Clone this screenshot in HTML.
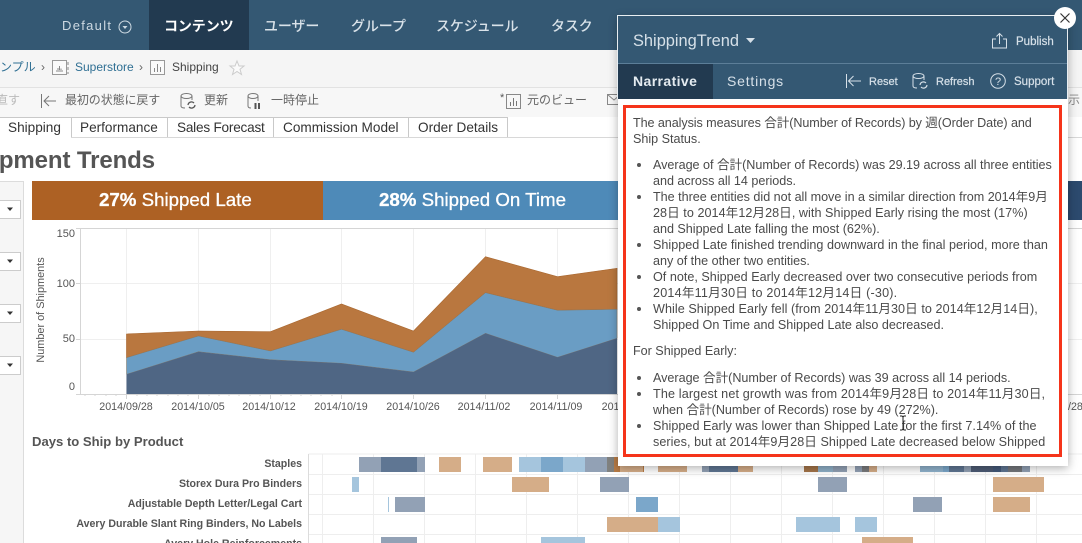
<!DOCTYPE html>
<html lang="ja"><head><meta charset="utf-8"><title>Shipping</title>
<style>
html,body{margin:0;padding:0;width:1082px;height:543px;overflow:hidden;background:#fff}
body{position:relative;font-family:"Liberation Sans","Noto Sans CJK JP",sans-serif;color:#444}
.a{position:absolute;white-space:nowrap}
.b{position:absolute}
svg{position:absolute;overflow:visible}
.nav{top:16px;line-height:20px;font-size:14px;color:#d9e2e9;font-weight:500;letter-spacing:-.1px}
.tb{top:92px;line-height:17px;font-size:12px;color:#666}
.tab{top:118px;line-height:19px;font-size:13.6px;color:#333}
.tl{position:absolute;top:117px;width:1px;height:20px;background:#c9c9c9}
.xl{top:400px;font-size:10.7px;line-height:14px;color:#555;transform:translateX(-50%)}
.yl{font-size:11px;line-height:14px;color:#555;text-align:right;width:24px;left:51px}
.pl{right:780px;font-size:10.6px;font-weight:bold;line-height:14px;color:#555}
.t{position:absolute;white-space:nowrap;font-size:12.6px;line-height:16px;color:#4a4a4a;letter-spacing:-.02px}
.d{position:absolute;left:637px;width:4px;height:4px;border-radius:50%;background:#555}
.r{position:absolute}
.o{background:#d5ad88}.l{background:#a5c5dd}.k{background:#92a1b5}.m{background:#7ba7ca}.n{background:#5f7693}
.ph{color:#d6e0e8;font-size:11.5px;line-height:16px;-webkit-text-stroke:.2px #d6e0e8}
</style></head><body>

<!-- top nav -->
<div class="b" style="left:0;top:0;width:1082px;height:50px;background:#345873"></div>
<div class="b" style="left:149px;top:0;width:100px;height:50px;background:#223a50"></div>
<div class="a" style="left:62px;top:17px;line-height:18px;font-size:13px;letter-spacing:1.3px;color:#cdd9e2">Default</div>
<svg style="left:118px;top:20px" width="14" height="14" viewBox="0 0 14 14"><circle cx="7" cy="7" r="6" fill="none" stroke="#cdd9e2"/><path d="M4.5 6h5L7 9z" fill="#cdd9e2"/></svg>
<div class="a nav" style="left:164px;color:#fff;font-weight:700">コンテンツ</div>
<div class="a nav" style="left:264px">ユーザー</div>
<div class="a nav" style="left:351px">グループ</div>
<div class="a nav" style="left:436px">スケジュール</div>
<div class="a nav" style="left:551px">タスク</div>

<!-- breadcrumb -->
<div class="b" style="left:0;top:50px;width:1082px;height:37px;background:#f5f5f5;border-bottom:1px solid #e2e2e2"></div>
<div class="a" style="left:-12px;top:59px;line-height:17px;font-size:12px;color:#2f6f93">サンプル</div>
<div class="a" style="left:41px;top:59px;line-height:17px;font-size:12px;color:#666">›</div>
<svg style="left:52px;top:60px" width="17" height="16" viewBox="0 0 17 16"><rect x=".5" y=".5" width="14" height="14" fill="#fafafa" stroke="#999"/><path d="M4 11h7M6 10V8M7.5 10V6M9 10V8.500" stroke="#888" fill="none"/><path d="M16 2v3M16 7v3M16 12v2" stroke="#888"/></svg>
<div class="a" style="left:75px;top:59px;line-height:17px;font-size:12px;color:#2f6f93">Superstore</div>
<div class="a" style="left:139px;top:59px;line-height:17px;font-size:12px;color:#666">›</div>
<svg style="left:150px;top:60px" width="16" height="16" viewBox="0 0 16 16"><rect x=".5" y=".5" width="14" height="14" fill="#fafafa" stroke="#999"/><path d="M4.500 12V8M7.500 12V4M10.500 12V7" stroke="#888" fill="none"/></svg>
<div class="a" style="left:172px;top:59px;line-height:17px;font-size:12px;color:#444">Shipping</div>
<svg style="left:229px;top:60px" width="16" height="16" viewBox="0 0 16 16"><path d="M8 1l2 5h5l-4 3.300 1.500 5.200L8 11.500l-4.500 3L5 9.300 1 6h5z" fill="#fafafa" stroke="#ccc"/></svg>

<!-- toolbar -->
<div class="b" style="left:0;top:88px;width:1082px;height:29px;background:#f7f7f7"></div>
<div class="a tb" style="left:-4px;color:#bbb">直す</div>
<svg style="left:41px;top:93px" width="16" height="16" viewBox="0 0 16 16"><path d="M.5 1v14M15 8H3M8 3L3 8l5 5" fill="none" stroke="#777"/></svg>
<div class="a tb" style="left:65px;letter-spacing:-.1px">最初の状態に戻す</div>
<svg style="left:180px;top:93px" width="17" height="16" viewBox="0 0 17 16"><ellipse cx="6.500" cy="3" rx="5.500" ry="2.500" fill="none" stroke="#777"/><path d="M1 3v10q0 2 4 2M12 3v4" fill="none" stroke="#777"/><path d="M8 12a3.500 3.500 0 0 1 6-2M15 12a3.500 3.500 0 0 1-6 2" fill="none" stroke="#555" stroke-width="1.300"/></svg>
<div class="a tb" style="left:204px">更新</div>
<svg style="left:247px;top:93px" width="16" height="17" viewBox="0 0 16 17"><ellipse cx="6" cy="3" rx="5" ry="2.500" fill="none" stroke="#777"/><path d="M1 3v10q0 2 3 2M11 3v5" fill="none" stroke="#777"/><path d="M7.500 10h2v6h-2zM11 10h2v6h-2z" fill="#555"/></svg>
<div class="a tb" style="left:271px">一時停止</div>
<div class="a" style="left:500px;top:91px;font-size:11px;line-height:14px;color:#555">*</div>
<svg style="left:506px;top:94px" width="16" height="16" viewBox="0 0 16 16"><rect x=".5" y=".5" width="14" height="14" fill="none" stroke="#888"/><path d="M4.500 12V8M7.500 12V4M10.500 12V7" stroke="#777"/></svg>
<div class="a tb" style="left:527px">元のビュー</div>
<svg style="left:607px;top:94px" width="14" height="12" viewBox="0 0 14 12"><rect x=".5" y=".5" width="13" height="10" fill="none" stroke="#888"/><path d="M.5 .5L7 6l6-5" fill="none" stroke="#888"/></svg>
<div class="a tb" style="left:1068px;color:#888">示</div>

<!-- tabs -->
<div class="b" style="left:71px;top:117px;width:436px;height:1px;background:#c9c9c9"></div>
<div class="b" style="left:0;top:137px;width:1082px;height:1px;background:#d8d8d8"></div>
<div class="b" style="left:0;top:117px;width:71px;height:21px;background:#fff"></div>
<div class="b" style="left:0;top:117px;width:71px;height:1px;background:#c9c9c9"></div>
<div class="tl" style="left:71px"></div><div class="tl" style="left:167px"></div><div class="tl" style="left:273px"></div><div class="tl" style="left:408px"></div><div class="tl" style="left:507px"></div>
<div class="a tab" style="left:8px">Shipping</div>
<div class="a tab" style="left:80px">Performance</div>
<div class="a tab" style="left:177px;letter-spacing:-.22px">Sales Forecast</div>
<div class="a tab" style="left:283px">Commission Model</div>
<div class="a tab" style="left:418px">Order Details</div>

<!-- title -->
<div class="a" style="right:927px;top:147px;line-height:28px;font-size:24px;font-weight:bold;color:#555;letter-spacing:-.1px">Shipment Trends</div>

<!-- sidebar -->
<div class="b" style="left:0;top:181px;width:23px;height:362px;background:#f6f6f6;border-right:1px solid #dcdcdc;border-top:1px solid #dcdcdc"></div>
<div class="b" style="left:-2px;top:200px;width:21px;height:17px;background:#fff;border:1px solid #ccc"></div>
<div class="b" style="left:-2px;top:252px;width:21px;height:17px;background:#fff;border:1px solid #ccc"></div>
<div class="b" style="left:-2px;top:304px;width:21px;height:17px;background:#fff;border:1px solid #ccc"></div>
<div class="b" style="left:-2px;top:356px;width:21px;height:17px;background:#fff;border:1px solid #ccc"></div>
<svg style="left:0;top:0" width="30" height="400"><path d="M7 207.500h6l-3 3.500zM7 259.500h6l-3 3.500zM7 311.500h6l-3 3.500zM7 363.500h6l-3 3.500z" fill="#333"/></svg>

<!-- kpi bars -->
<div class="b" style="left:32px;top:181px;width:291px;height:39px;background:#ad6124"></div>
<div class="b" style="left:323px;top:181px;width:295px;height:39px;background:#4e8ab8"></div>
<div class="b" style="left:1060px;top:181px;width:22px;height:39px;background:#2c4a6e"></div>
<div class="a" style="left:99px;top:189px;line-height:22px;font-size:18.7px;color:#fff;-webkit-text-stroke:.3px #fff"><b>27%</b> Shipped Late</div>
<div class="a" style="left:379px;top:189px;line-height:22px;font-size:18.7px;color:#fff;-webkit-text-stroke:.3px #fff"><b>28%</b> Shipped On Time</div>

<!-- area chart -->
<svg style="left:0;top:0" width="1082" height="543" viewBox="0 0 1082 543">
<g fill="none" stroke="#efefef">
<path d="M126.500 228.500V394M198.500 228.500V394M270.500 228.500V394M341.500 228.500V394M413.500 228.500V394M485.500 228.500V394M557.500 228.500V394M81 283.500H1082M81 339.500H1082"/>
</g>
<path d="M76 228.500H1082" stroke="#d5d5d5" fill="none"/>
<path d="M80.500 228V394.500M76 394.500H1082M76 283.500h5M76 339.500h5" stroke="#d5d5d5" fill="none"/>
<path d="M126.500 394v5M198.500 394v5M270.500 394v5M341.500 394v5M413.500 394v5M485.500 394v5M557.500 394v5M85 394v2M95 394v2M106 394v2M116 394v2M137 394v2M147 394v2M157 394v2M168 394v2M178 394v2M188 394v2M209 394v2M219 394v2M229 394v2M239 394v2M250 394v2M260 394v2M281 394v2M291 394v2M301 394v2M311 394v2M321 394v2M332 394v2" stroke="#d5d5d5" fill="none"/>
<path d="M126.500 334L198.500 331L270.500 331.700L341.500 304L413.500 331L485.500 256.700L557.500 276.700L617 268.300V309.300L557.500 310.300L485.500 292.700L413.500 352.300L341.500 329.300L270.500 351L198.500 336L126.500 357.700Z" fill="#b9773f" stroke="#a8662e" stroke-width=".6"/>
<path d="M126.500 357.700L198.500 336L270.500 351L341.500 329.300L413.500 352.300L485.500 292.700L557.500 310.300L617 309.300V338.300L557.500 357.300L485.500 333.300L413.500 372L341.500 363.300L270.500 359.700L198.500 351.700L126.500 374.300Z" fill="#6a9dc4" stroke="#8c7a62" stroke-width=".5"/>
<path d="M126.500 374.300L198.500 351.700L270.500 359.700L341.500 363.300L413.500 372L485.500 333.300L557.500 357.300L617 338.300V394H126.500Z" fill="#4f6684"/>
<path d="M1068 283.500h14M1068 339.500h14" stroke="#efefef"/>
</svg>
<div class="a yl" style="top:227px">150</div>
<div class="a yl" style="top:277px">100</div>
<div class="a yl" style="top:332px">50</div>
<div class="a yl" style="top:380px">0</div>
<div class="a" style="left:41px;top:310px;font-size:10.9px;line-height:14px;color:#555;transform:translate(-50%,-50%) rotate(-90deg)">Number of Shipments</div>
<div class="a xl" style="left:126px">2014/09/28</div>
<div class="a xl" style="left:198px">2014/10/05</div>
<div class="a xl" style="left:269px">2014/10/12</div>
<div class="a xl" style="left:341px">2014/10/19</div>
<div class="a xl" style="left:413px">2014/10/26</div>
<div class="a xl" style="left:484px">2014/11/02</div>
<div class="a xl" style="left:556px">2014/11/09</div>
<div class="a xl" style="left:628px">2014/11/16</div>
<div class="a" style="left:1068px;top:400px;font-size:10.7px;line-height:14px;color:#555">/28</div>

<!-- gantt -->
<div class="a" style="left:32px;top:434px;line-height:16px;font-size:13.1px;font-weight:bold;color:#555">Days to Ship by Product</div>
<div class="a pl" style="top:457px">Staples</div>
<div class="a pl" style="top:477px">Storex Dura Pro Binders</div>
<div class="a pl" style="top:497px">Adjustable Depth Letter/Legal Cart</div>
<div class="a pl" style="top:517px">Avery Durable Slant Ring Binders, No Labels</div>
<div class="a pl" style="top:537px">Avery Hole Reinforcements</div>
<svg style="left:0;top:0" width="1082" height="543" viewBox="0 0 1082 543"><g stroke="#eeeeee" fill="none" stroke-width="1">
<path d="M308.500 454H1082M308.500 474.500H1082M308.500 494.500H1082M308.500 514.500H1082M308.500 534.500H1082"/>
<path d="M322.500 454V543M373.500 454V543M424.500 454V543M475.500 454V543M526.500 454V543M577.500 454V543M628.500 454V543M679.500 454V543M730.500 454V543M781.500 454V543M832.500 454V543M883.500 454V543M934.500 454V543M985.500 454V543M1036.500 454V543"/></g>
<path d="M308.500 454V543" stroke="#dcdcdc"/></svg>
<div class="r k" style="left:359px;top:457px;width:22px;height:15px"></div>
<div class="r n" style="left:381px;top:457px;width:36px;height:15px"></div>
<div class="r k" style="left:417px;top:457px;width:8px;height:15px"></div>
<div class="r o" style="left:439px;top:457px;width:22px;height:15px"></div>
<div class="r o" style="left:483px;top:457px;width:29px;height:15px"></div>
<div class="r l" style="left:519px;top:457px;width:22px;height:15px"></div>
<div class="r m" style="left:541px;top:457px;width:22px;height:15px"></div>
<div class="r l" style="left:563px;top:457px;width:22px;height:15px"></div>
<div class="r k" style="left:585px;top:457px;width:22px;height:15px"></div>
<div class="r" style="left:607px;top:457px;width:7px;height:15px;background:#80817f"></div>
<div class="r" style="left:614px;top:457px;width:30px;height:15px;background:#b77b45"></div>
<!-- row1 below panel -->
<div class="r o" style="left:620px;top:457px;width:23px;height:15px"></div>
<div class="r o" style="left:658px;top:457px;width:29px;height:15px"></div>
<div class="r k" style="left:702px;top:457px;width:7px;height:15px"></div>
<div class="r n" style="left:709px;top:457px;width:29px;height:15px"></div>
<div class="r o" style="left:738px;top:457px;width:15px;height:15px"></div>
<div class="r" style="left:804px;top:457px;width:14px;height:15px;background:#a57549"></div>
<div class="r" style="left:818px;top:457px;width:15px;height:15px;background:#8fb0c8"></div>
<div class="r k" style="left:833px;top:457px;width:14px;height:15px"></div>
<div class="r k" style="left:855px;top:457px;width:7px;height:15px"></div>
<div class="r" style="left:862px;top:457px;width:7px;height:15px;background:#7b7b7d"></div>
<div class="r o" style="left:869px;top:457px;width:8px;height:15px"></div>
<div class="r" style="left:920px;top:457px;width:23px;height:15px;background:#90b3cd"></div>
<div class="r" style="left:943px;top:457px;width:6px;height:15px;background:#7ba7ca"></div>
<div class="r n" style="left:949px;top:457px;width:15px;height:15px"></div>
<div class="r k" style="left:964px;top:457px;width:7px;height:15px"></div>
<div class="r" style="left:971px;top:457px;width:22px;height:15px;background:#4d5c75"></div>
<div class="r" style="left:993px;top:457px;width:8px;height:15px;background:#44597a"></div>
<div class="r n" style="left:1001px;top:457px;width:7px;height:15px"></div>
<div class="r" style="left:1008px;top:457px;width:14px;height:15px;background:#74777c"></div>
<div class="r k" style="left:1022px;top:457px;width:8px;height:15px"></div>

<div class="r l" style="left:352px;top:477px;width:7px;height:15px"></div>
<div class="r o" style="left:512px;top:477px;width:37px;height:15px"></div>
<div class="r k" style="left:600px;top:477px;width:29px;height:15px"></div>
<div class="r k" style="left:818px;top:477px;width:29px;height:15px"></div>
<div class="r o" style="left:993px;top:477px;width:51px;height:15px"></div>

<div class="r l" style="left:388px;top:497px;width:1px;height:15px"></div>
<div class="r k" style="left:395px;top:497px;width:30px;height:15px"></div>
<div class="r m" style="left:636px;top:497px;width:22px;height:15px"></div>
<div class="r k" style="left:913px;top:497px;width:29px;height:15px"></div>
<div class="r o" style="left:993px;top:497px;width:37px;height:15px"></div>

<div class="r o" style="left:607px;top:517px;width:51px;height:15px"></div>
<div class="r l" style="left:658px;top:517px;width:22px;height:15px"></div>
<div class="r l" style="left:796px;top:517px;width:44px;height:15px"></div>
<div class="r l" style="left:855px;top:517px;width:22px;height:15px"></div>

<div class="r k" style="left:381px;top:537px;width:36px;height:6px"></div>
<div class="r l" style="left:541px;top:537px;width:44px;height:6px"></div>
<div class="r o" style="left:862px;top:537px;width:51px;height:6px"></div>

<!-- panel -->
<div class="b" style="left:618px;top:16px;width:450px;height:450px;background:#fff;box-shadow:0 2px 9px rgba(0,0,0,.32)"></div>
<div class="b" style="left:617px;top:15px;width:451px;height:84px;background:#345873;border-top:1px solid #e8eef2;border-left:1px solid #e8eef2;border-right:1px solid #e8eef2;box-sizing:border-box"></div>
<div class="b" style="left:618px;top:63px;width:449px;height:1px;background:#5c7e98"></div>
<div class="b" style="left:618px;top:64px;width:95px;height:35px;background:#223a50"></div>
<div class="a" style="left:633px;top:30px;line-height:22px;font-size:16.4px;color:#d6e0e8">ShippingTrend</div>
<svg style="left:746px;top:38px" width="10" height="6"><path d="M0 0h9L4.500 5z" fill="#d6e0e8"/></svg>
<svg style="left:991px;top:32px" width="17" height="17" viewBox="0 0 17 17"><path d="M5 7H1.500v9h14V7H12M8.500 12V1.500M5.500 4.500l3-3 3 3" fill="none" stroke="#d6e0e8"/></svg>
<div class="a ph" style="left:1016px;top:34px">Publish</div>
<div class="a" style="left:633px;top:72px;line-height:18px;font-size:14px;font-weight:bold;letter-spacing:.4px;color:#e4ebf0">Narrative</div>
<div class="a" style="left:727px;top:72px;line-height:18px;font-size:14px;letter-spacing:.8px;color:#d6e0e8">Settings</div>
<svg style="left:845px;top:73px" width="17" height="16" viewBox="0 0 17 16"><path d="M1.500 1v14M16 8H3.500M8.500 3l-5 5 5 5" fill="none" stroke="#d6e0e8"/></svg>
<div class="a ph" style="left:869px;top:74px;font-size:11px">Reset</div>
<svg style="left:912px;top:73px" width="17" height="16" viewBox="0 0 17 16"><ellipse cx="6.500" cy="3" rx="5.500" ry="2.500" fill="none" stroke="#d6e0e8"/><path d="M1 3v10q0 2 4 2M12 3v4" fill="none" stroke="#d6e0e8"/><path d="M8 12a3.500 3.500 0 0 1 6-2M15 12a3.500 3.500 0 0 1-6 2" fill="none" stroke="#d6e0e8" stroke-width="1.200"/></svg>
<div class="a ph" style="left:936px;top:74px;font-size:11px">Refresh</div>
<svg style="left:990px;top:73px" width="16" height="16" viewBox="0 0 16 16"><circle cx="8" cy="8" r="7.300" fill="none" stroke="#d6e0e8"/><text x="8" y="12" text-anchor="middle" font-size="11" fill="#d6e0e8" font-family="Liberation Sans">?</text></svg>
<div class="a ph" style="left:1014px;top:74px">Support</div>
<svg style="left:1054px;top:7px" width="22" height="22" viewBox="0 0 22 22"><circle cx="11" cy="11" r="11" fill="#fff"/><path d="M6.500 6.500l9 9M15.500 6.500l-9 9" stroke="#333" stroke-width="1.200" fill="none"/></svg>

<!-- red box -->
<div class="b" style="left:623px;top:105px;width:439px;height:352px;border:3px solid #f5341a;box-sizing:border-box;background:#fff"></div>
<div class="t" style="left:633px;top:115px;letter-spacing:-.08px">The analysis measures 合計(Number of Records) by 週(Order Date) and</div>
<div class="t" style="left:633px;top:131px">Ship Status.</div>
<div class="d" style="top:163px"></div>
<div class="t" style="left:653px;top:157px">Average of 合計(Number of Records) was 29.19 across all three entities</div>
<div class="t" style="left:653px;top:173px">and across all 14 periods.</div>
<div class="d" style="top:195px"></div>
<div class="t" style="left:653px;top:189px">The three entities did not all move in a similar direction from 2014年9月</div>
<div class="t" style="left:653px;top:205px;letter-spacing:.05px">28日 to 2014年12月28日, with Shipped Early rising the most (17%)</div>
<div class="t" style="left:653px;top:221px">and Shipped Late falling the most (62%).</div>
<div class="d" style="top:243px"></div>
<div class="t" style="left:653px;top:237px;letter-spacing:.01px">Shipped Late finished trending downward in the final period, more than</div>
<div class="t" style="left:653px;top:253px">any of the other two entities.</div>
<div class="d" style="top:275px"></div>
<div class="t" style="left:653px;top:269px;letter-spacing:.01px">Of note, Shipped Early decreased over two consecutive periods from</div>
<div class="t" style="left:653px;top:285px;letter-spacing:.2px">2014年11月30日 to 2014年12月14日 (-30).</div>
<div class="d" style="top:307px"></div>
<div class="t" style="left:653px;top:301px;letter-spacing:.06px">While Shipped Early fell (from 2014年11月30日 to 2014年12月14日),</div>
<div class="t" style="left:653px;top:317px">Shipped On Time and Shipped Late also decreased.</div>
<div class="t" style="left:633px;top:343px">For Shipped Early:</div>
<div class="d" style="top:376px"></div>
<div class="t" style="left:653px;top:370px">Average 合計(Number of Records) was 39 across all 14 periods.</div>
<div class="d" style="top:392px"></div>
<div class="t" style="left:653px;top:386px;letter-spacing:.14px">The largest net growth was from 2014年9月28日 to 2014年11月30日,</div>
<div class="t" style="left:653px;top:402px">when 合計(Number of Records) rose by 49 (272%).</div>
<div class="d" style="top:424px"></div>
<div class="t" style="left:653px;top:418px;letter-spacing:.04px">Shipped Early was lower than Shipped Late for the first 7.14% of the</div>
<div class="t" style="left:653px;top:434px;letter-spacing:.06px">series, but at 2014年9月28日 Shipped Late decreased below Shipped</div>
<svg style="left:899px;top:415px" width="8" height="16" viewBox="0 0 8 16"><path d="M1 1h2l1 1 1-1h2M4 2v12M1 15h2l1-1 1 1h2" fill="none" stroke="#222"/></svg>

</body></html>
